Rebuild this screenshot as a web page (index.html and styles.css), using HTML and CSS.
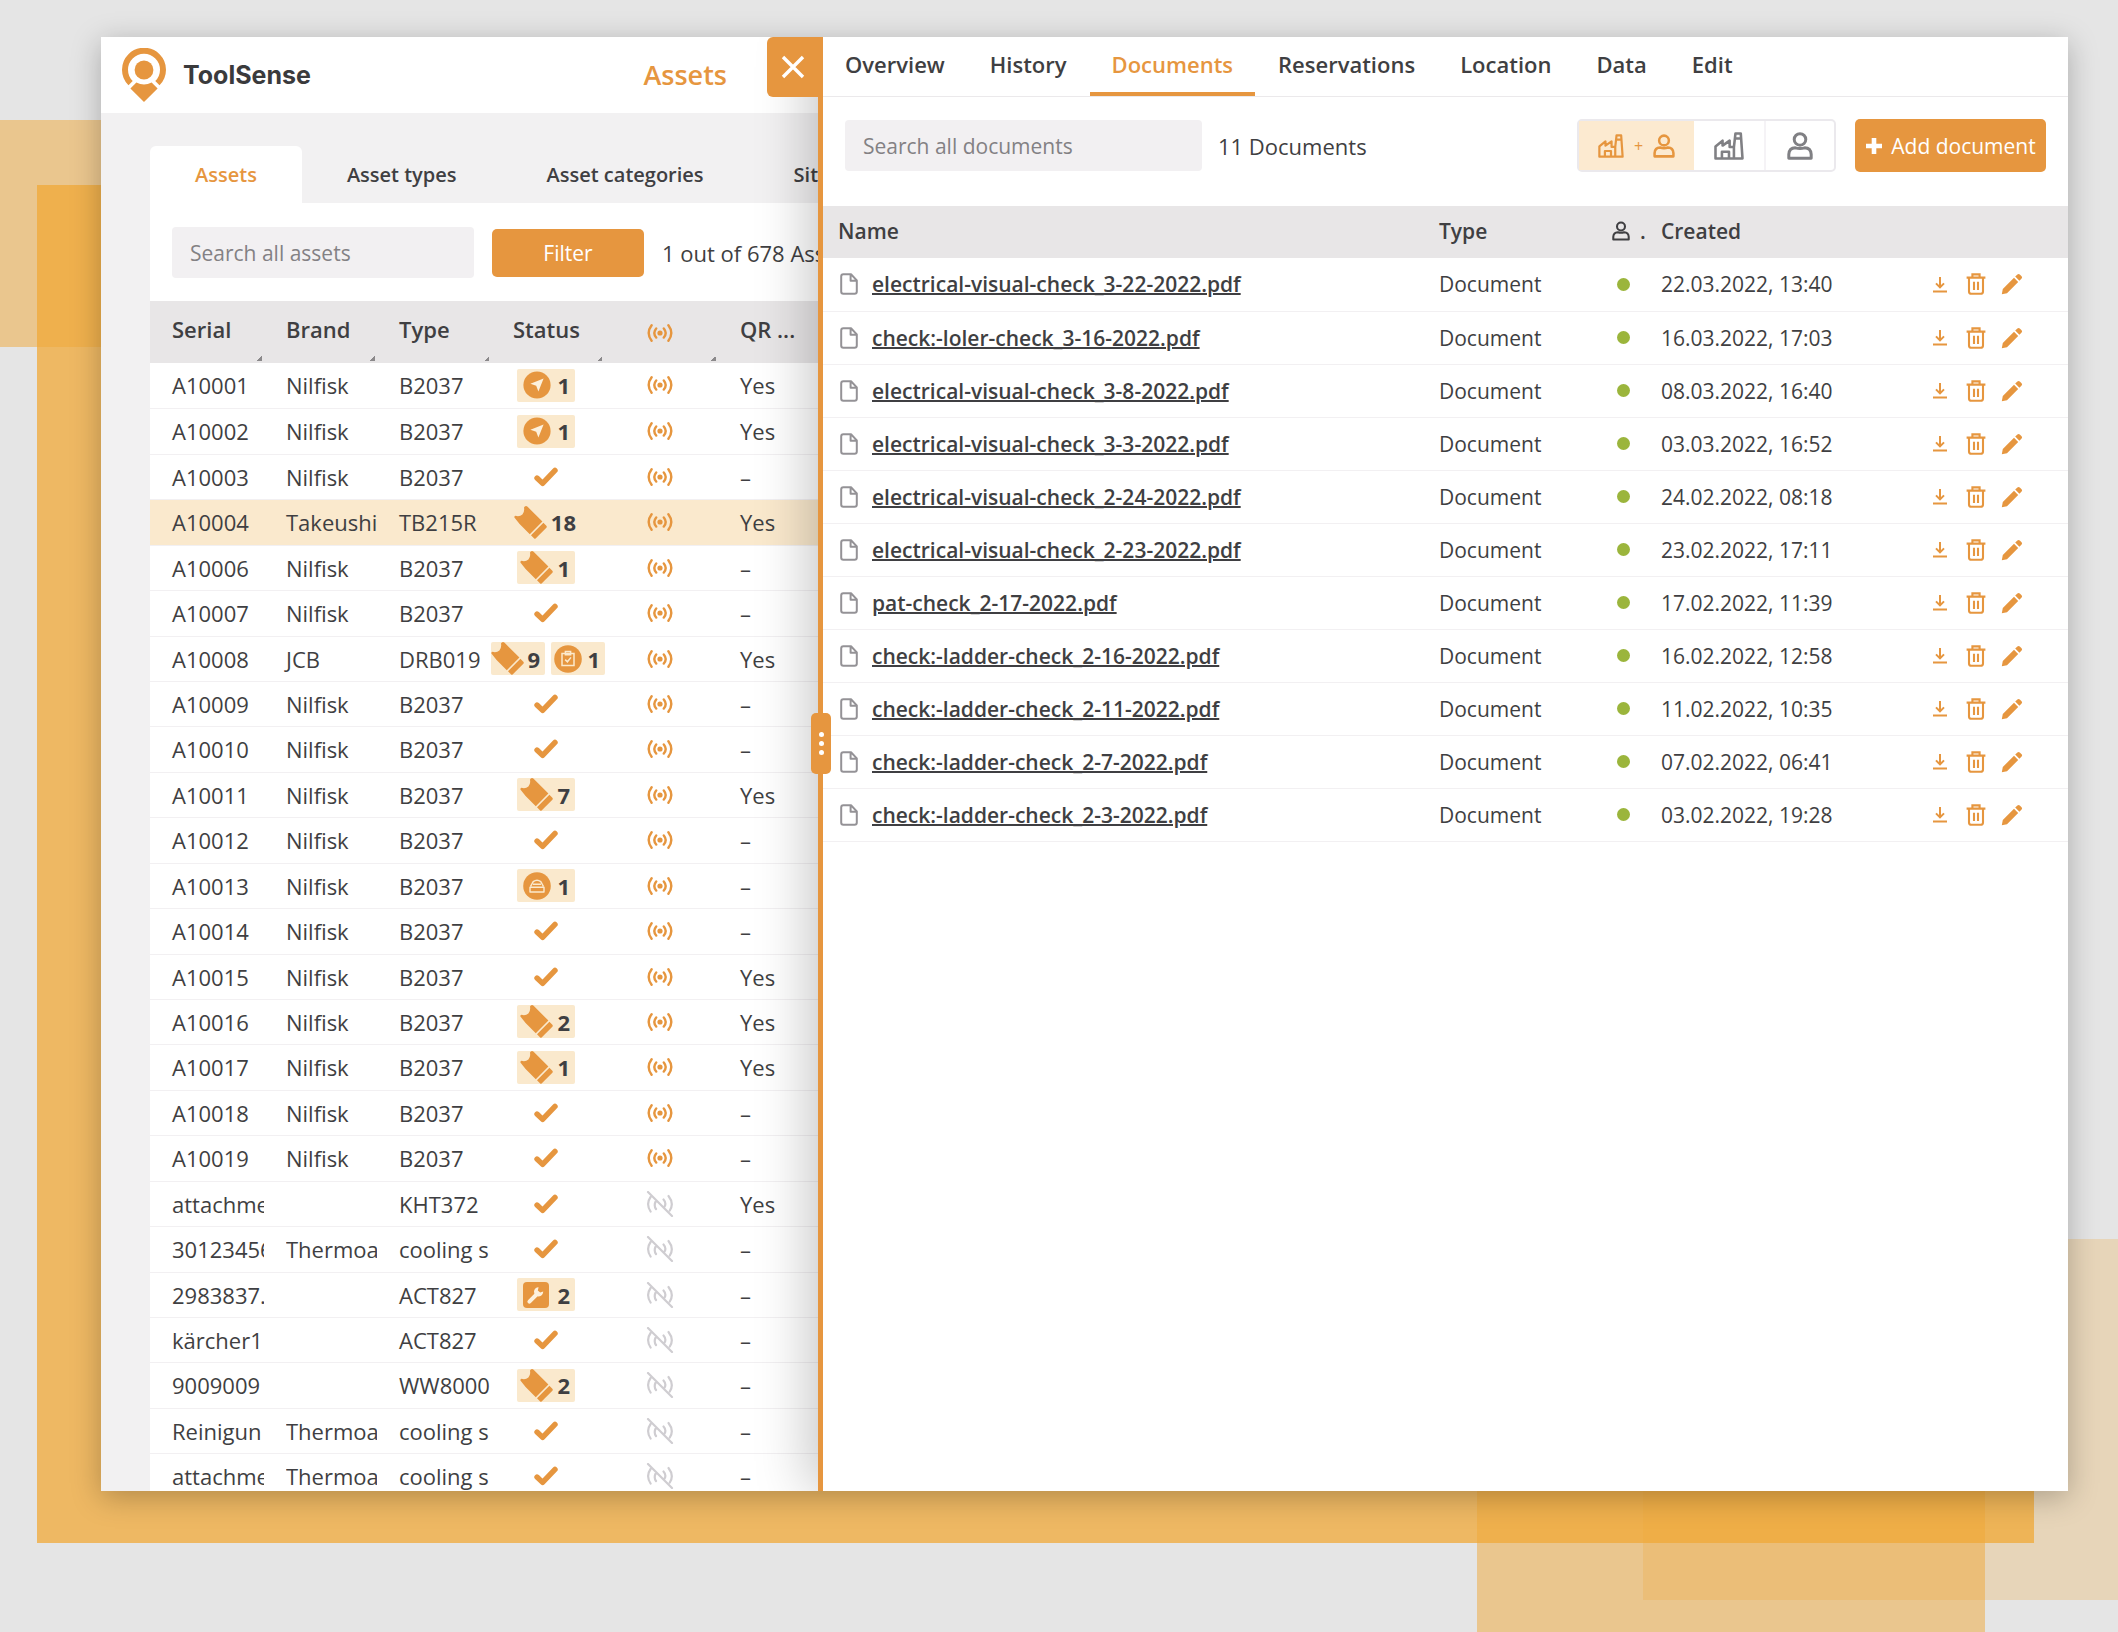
FILE: index.html
```html
<!DOCTYPE html>
<html lang="en">

<head>
  <meta charset="UTF-8">
  <meta name="viewport" content="width=device-width, initial-scale=1.0">
  <title>ToolSense - Assets</title>
  <link rel="stylesheet" href="styles.css">
</head>

<body>
  <!-- Icon set -->
  <svg class="icon-set" aria-hidden="true">
    <symbol id="signal" viewBox="0 0 26 20">
      <circle cx="13" cy="10" r="2.6" fill="currentColor" />
      <path d="M4.6 2.2Q-1.2 10 4.6 17.8M9.2 5.4Q5.4 10 9.2 14.6M16.8 5.4Q20.6 10 16.8 14.6M21.4 2.2Q27.2 10 21.4 17.8" fill="none" stroke="currentColor" stroke-width="2.4" stroke-linecap="round" />
    </symbol>
    <symbol id="signal-off" viewBox="0 0 28 26">
      <path d="M2 1L26 25M4.6 6Q-.4 13 4.6 20.5M9.4 11Q7.8 15 10 18M17.5 8.5Q20.6 12 18.6 15.5M22.5 5Q28.4 12.5 23.8 19.5" fill="none" stroke="currentColor" stroke-width="2.2" stroke-linecap="round" />
    </symbol>
    <symbol id="check" viewBox="0 0 24 20">
      <path d="M3 11L8.6 16.4L21 3.4" fill="none" stroke="currentColor" stroke-width="5.4" stroke-linecap="round" stroke-linejoin="round" />
    </symbol>
    <symbol id="ticket" viewBox="0 0 33 33">
      <path d="M12 0Q12.8 0 13.6 .8L28.4 15.6L15.8 28.2L5.6 18L.4 11.4Q0 10.4 1.4 9.8Q5.6 11 8.4 8.4Q10.8 5.6 10 1.6Q10.6 0 12 0ZM29.4 16.8L32.6 20Q33 20.8 32.6 21.4L21.6 32.4Q20.8 33 20.2 32.4L17 29.2Z" fill="currentColor" />
    </symbol>
    <symbol id="navigate" viewBox="0 0 28 28">
      <circle cx="14" cy="14" r="13.6" fill="currentColor" />
      <path d="M20.6 7.4L15.4 20.4L13.2 14.8L7.4 12.8Z" fill="#fdf1dc" />
    </symbol>
    <symbol id="clipboard" viewBox="0 0 28 28">
      <circle cx="14" cy="14" r="13.8" fill="currentColor" />
      <path d="M8 8.4H20V20.6H8ZM11.4 8.4V6.6H16.6V9.8H11.4ZM11.2 14.6L13.4 16.8L17 12.4" fill="none" stroke="#fbe9cc" stroke-width="1.5" />
    </symbol>
    <symbol id="helmet" viewBox="0 0 28 28">
      <circle cx="14" cy="14" r="13.8" fill="currentColor" />
      <path d="M7.6 14.4L10.2 9.6Q14 6.8 17.8 9.6L20.4 14.4M7 15.2H21V20H7ZM10 12.2H18" fill="none" stroke="#fbe9cc" stroke-width="1.4" stroke-linejoin="round" />
    </symbol>
    <symbol id="wrench" viewBox="0 0 26 26">
      <rect width="26" height="26" rx="4" fill="currentColor" />
      <path d="M6.4 19.6L14 12" stroke="#fdf1dc" stroke-width="4" stroke-linecap="round" />
      <path d="M20.2 9.6A4.6 4.6 0 1 1 15.6 5.2L14.8 8.4L17.2 10.4Z" fill="#fdf1dc" />
    </symbol>
    <symbol id="factory" viewBox="0 0 28 26">
      <path d="M1.4 24.6V13.4L8 8V12.6L14.6 8V14H18.6L20 1.4H25L26.6 24.6ZM18.6 14V24M20 6H25.4M7.4 24.4V18.4H14V24.4" fill="none" stroke="currentColor" stroke-width="2.4" stroke-linejoin="round" />
    </symbol>
    <symbol id="person" viewBox="0 0 28 30">
      <circle cx="14" cy="8" r="6.2" fill="none" stroke="currentColor" stroke-width="3.2" />
      <path d="M2 28.2V24Q2.4 17.2 9 17Q14 18.6 19 17Q25.6 17.2 26 24V28.2Z" fill="none" stroke="currentColor" stroke-width="3.2" stroke-linejoin="round" />
    </symbol>
    <symbol id="file" viewBox="0 0 18 22">
      <path d="M1.2 3.4Q1.2 1.2 3.4 1.2H11L16.8 7.4V18.6Q16.8 20.8 14.6 20.8H3.4Q1.2 20.8 1.2 18.6ZM10.6 1.2V7.8H16.8" fill="none" stroke="currentColor" stroke-width="2" stroke-linejoin="round" />
    </symbol>
    <symbol id="download" viewBox="0 0 16 17">
      <path d="M8 1V11M4 7.4L8 11.4L12 7.4M1 15.6H15" fill="none" stroke="currentColor" stroke-width="2" />
    </symbol>
    <symbol id="trash" viewBox="0 0 20 22">
      <path d="M.6 4.6H19.4M6.4 4.4V1.4H13.6V4.4M3 5V18.4Q3 20.8 5.4 20.8H14.6Q17 20.8 17 18.4V5M8 8.8V17M12 8.8V17" fill="none" stroke="currentColor" stroke-width="2.1" />
    </symbol>
    <symbol id="pencil" viewBox="0 0 22 22">
      <path d="M.8 21.2L1.8 16L13 4.8L17.2 9L6 20.2ZM14.2 3.6L16.4 1.4Q17.6 .4 18.8 1.4L20.6 3.2Q21.6 4.4 20.6 5.6L18.4 7.8Z" fill="currentColor" />
    </symbol>
  </svg>

  <div class="backdrop">
    <div class="block block-left"></div>
    <div class="block block-right"></div>
    <div class="block block-bottom"></div>
    <div class="block block-main"></div>
  </div>

  <div class="window">
    <main class="assets">
      <header class="header">
        <a class="logo" href="#">
          <svg viewBox="0 0 44 54" aria-hidden="true">
            <path d="M8.6 35.2A19 19 0 1 1 35.4 35.2" fill="none" stroke="currentColor" stroke-width="6" />
            <circle cx="22" cy="22" r="9.4" fill="currentColor" />
            <path d="M8.4 40.6L14.4 34.4Q22 38.6 29.6 34.4L35.6 40.6L22 54Z" fill="currentColor" />
          </svg>
          ToolSense
        </a>
        <h1>Assets</h1>
      </header>
      <div class="assets-body">
        <nav class="tabs">
          <a class="active" href="#">Assets</a>
          <a href="#">Asset types</a>
          <a href="#">Asset categories</a>
          <a href="#">Sites</a>
        </nav>
        <div class="card">
          <div class="toolbar">
            <input class="search" type="search" placeholder="Search all assets" aria-label="Search all assets">
            <button class="button filter" type="button">Filter</button>
            <span>1 out of 678 Assets</span>
          </div>
          <table class="asset-table">
            <colgroup>
              <col class="col-wide">
              <col class="col">
              <col class="col-wide">
              <col class="col">
              <col class="col-wide">
              <col>
            </colgroup>
            <thead>
              <tr>
                <th>Serial</th>
                <th>Brand</th>
                <th>Type</th>
                <th>Status</th>
                <th class="center"><svg class="signal" role="img" aria-label="Signal"><use href="#signal" /></svg></th>
                <th>QR ...</th>
              </tr>
            </thead>
            <tbody>
              <tr>
                <td>A10001</td><td>Nilfisk</td><td>B2037</td>
                <td class="center"><span class="badge"><svg class="round"><use href="#navigate" /></svg>1</span></td>
                <td class="center"><svg class="signal"><use href="#signal" /></svg></td>
                <td>Yes</td>
              </tr>
              <tr>
                <td>A10002</td><td>Nilfisk</td><td>B2037</td>
                <td class="center"><span class="badge"><svg class="round"><use href="#navigate" /></svg>1</span></td>
                <td class="center"><svg class="signal"><use href="#signal" /></svg></td>
                <td>Yes</td>
              </tr>
              <tr>
                <td>A10003</td><td>Nilfisk</td><td>B2037</td>
                <td class="center"><svg class="check"><use href="#check" /></svg></td>
                <td class="center"><svg class="signal"><use href="#signal" /></svg></td>
                <td>–</td>
              </tr>
              <tr class="selected">
                <td>A10004</td><td>Takeushi</td><td>TB215R</td>
                <td class="center"><span class="badge"><svg class="ticket"><use href="#ticket" /></svg>18</span></td>
                <td class="center"><svg class="signal"><use href="#signal" /></svg></td>
                <td>Yes</td>
              </tr>
              <tr>
                <td>A10006</td><td>Nilfisk</td><td>B2037</td>
                <td class="center"><span class="badge"><svg class="ticket"><use href="#ticket" /></svg>1</span></td>
                <td class="center"><svg class="signal"><use href="#signal" /></svg></td>
                <td>–</td>
              </tr>
              <tr>
                <td>A10007</td><td>Nilfisk</td><td>B2037</td>
                <td class="center"><svg class="check"><use href="#check" /></svg></td>
                <td class="center"><svg class="signal"><use href="#signal" /></svg></td>
                <td>–</td>
              </tr>
              <tr>
                <td>A10008</td><td>JCB</td><td>DRB019</td>
                <td class="double">
                  <div>
                    <span class="badge"><svg class="ticket"><use href="#ticket" /></svg>9</span>
                    <span class="badge"><svg class="round"><use href="#clipboard" /></svg>1</span>
                  </div>
                </td>
                <td class="center"><svg class="signal"><use href="#signal" /></svg></td>
                <td>Yes</td>
              </tr>
              <tr>
                <td>A10009</td><td>Nilfisk</td><td>B2037</td>
                <td class="center"><svg class="check"><use href="#check" /></svg></td>
                <td class="center"><svg class="signal"><use href="#signal" /></svg></td>
                <td>–</td>
              </tr>
              <tr>
                <td>A10010</td><td>Nilfisk</td><td>B2037</td>
                <td class="center"><svg class="check"><use href="#check" /></svg></td>
                <td class="center"><svg class="signal"><use href="#signal" /></svg></td>
                <td>–</td>
              </tr>
              <tr>
                <td>A10011</td><td>Nilfisk</td><td>B2037</td>
                <td class="center"><span class="badge"><svg class="ticket"><use href="#ticket" /></svg>7</span></td>
                <td class="center"><svg class="signal"><use href="#signal" /></svg></td>
                <td>Yes</td>
              </tr>
              <tr>
                <td>A10012</td><td>Nilfisk</td><td>B2037</td>
                <td class="center"><svg class="check"><use href="#check" /></svg></td>
                <td class="center"><svg class="signal"><use href="#signal" /></svg></td>
                <td>–</td>
              </tr>
              <tr>
                <td>A10013</td><td>Nilfisk</td><td>B2037</td>
                <td class="center"><span class="badge"><svg class="round"><use href="#helmet" /></svg>1</span></td>
                <td class="center"><svg class="signal"><use href="#signal" /></svg></td>
                <td>–</td>
              </tr>
              <tr>
                <td>A10014</td><td>Nilfisk</td><td>B2037</td>
                <td class="center"><svg class="check"><use href="#check" /></svg></td>
                <td class="center"><svg class="signal"><use href="#signal" /></svg></td>
                <td>–</td>
              </tr>
              <tr>
                <td>A10015</td><td>Nilfisk</td><td>B2037</td>
                <td class="center"><svg class="check"><use href="#check" /></svg></td>
                <td class="center"><svg class="signal"><use href="#signal" /></svg></td>
                <td>Yes</td>
              </tr>
              <tr>
                <td>A10016</td><td>Nilfisk</td><td>B2037</td>
                <td class="center"><span class="badge"><svg class="ticket"><use href="#ticket" /></svg>2</span></td>
                <td class="center"><svg class="signal"><use href="#signal" /></svg></td>
                <td>Yes</td>
              </tr>
              <tr>
                <td>A10017</td><td>Nilfisk</td><td>B2037</td>
                <td class="center"><span class="badge"><svg class="ticket"><use href="#ticket" /></svg>1</span></td>
                <td class="center"><svg class="signal"><use href="#signal" /></svg></td>
                <td>Yes</td>
              </tr>
              <tr>
                <td>A10018</td><td>Nilfisk</td><td>B2037</td>
                <td class="center"><svg class="check"><use href="#check" /></svg></td>
                <td class="center"><svg class="signal"><use href="#signal" /></svg></td>
                <td>–</td>
              </tr>
              <tr>
                <td>A10019</td><td>Nilfisk</td><td>B2037</td>
                <td class="center"><svg class="check"><use href="#check" /></svg></td>
                <td class="center"><svg class="signal"><use href="#signal" /></svg></td>
                <td>–</td>
              </tr>
              <tr>
                <td><div class="clip">attachme</div></td><td></td><td>KHT372</td>
                <td class="center"><svg class="check"><use href="#check" /></svg></td>
                <td class="center"><svg class="signal-off"><use href="#signal-off" /></svg></td>
                <td>Yes</td>
              </tr>
              <tr>
                <td><div class="clip">30123456</div></td><td><div class="clip">Thermoa</div></td><td>cooling s</td>
                <td class="center"><svg class="check"><use href="#check" /></svg></td>
                <td class="center"><svg class="signal-off"><use href="#signal-off" /></svg></td>
                <td>–</td>
              </tr>
              <tr>
                <td><div class="clip">2983837.</div></td><td></td><td>ACT827</td>
                <td class="center"><span class="badge"><svg class="square"><use href="#wrench" /></svg>2</span></td>
                <td class="center"><svg class="signal-off"><use href="#signal-off" /></svg></td>
                <td>–</td>
              </tr>
              <tr>
                <td>kärcher1</td><td></td><td>ACT827</td>
                <td class="center"><svg class="check"><use href="#check" /></svg></td>
                <td class="center"><svg class="signal-off"><use href="#signal-off" /></svg></td>
                <td>–</td>
              </tr>
              <tr>
                <td>9009009</td><td></td><td>WW8000</td>
                <td class="center"><span class="badge"><svg class="ticket"><use href="#ticket" /></svg>2</span></td>
                <td class="center"><svg class="signal-off"><use href="#signal-off" /></svg></td>
                <td>–</td>
              </tr>
              <tr>
                <td>Reinigun</td><td><div class="clip">Thermoa</div></td><td>cooling s</td>
                <td class="center"><svg class="check"><use href="#check" /></svg></td>
                <td class="center"><svg class="signal-off"><use href="#signal-off" /></svg></td>
                <td>–</td>
              </tr>
              <tr>
                <td><div class="clip">attachme</div></td><td><div class="clip">Thermoa</div></td><td>cooling s</td>
                <td class="center"><svg class="check"><use href="#check" /></svg></td>
                <td class="center"><svg class="signal-off"><use href="#signal-off" /></svg></td>
                <td>–</td>
              </tr>
            </tbody>
          </table>
        </div>
      </div>
    </main>

    <aside class="detail">
      <button class="close" type="button" aria-label="Close">
        <svg viewBox="0 0 24 24"><path d="M2 2L22 22M22 2L2 22" stroke="currentColor" stroke-width="3.4" /></svg>
      </button>
      <button class="handle" type="button" aria-label="Resize panel"><i></i><i></i><i></i></button>

      <nav class="detail-tabs">
        <a href="#">Overview</a>
        <a href="#">History</a>
        <a class="active" href="#">Documents</a>
        <a href="#">Reservations</a>
        <a href="#">Location</a>
        <a href="#">Data</a>
        <a href="#">Edit</a>
      </nav>

      <div class="detail-toolbar">
        <input class="search" type="search" placeholder="Search all documents" aria-label="Search all documents">
        <span>11 Documents</span>
        <div class="toggle">
          <button class="on" type="button" aria-label="Company and customer">
            <svg class="factory-small"><use href="#factory" /></svg><b>+</b><svg class="person-small"><use href="#person" /></svg>
          </button>
          <button type="button" aria-label="Company"><svg><use href="#factory" /></svg></button>
          <button type="button" aria-label="Customer"><svg><use href="#person" /></svg></button>
        </div>
        <button class="button add" type="button">
          <svg viewBox="0 0 18 18"><path d="M9 1V17M1 9H17" stroke="currentColor" stroke-width="4.6" /></svg>
          Add document
        </button>
      </div>

      <table class="doc-table">
        <colgroup>
          <col>
          <col class="col-type">
          <col class="col-person">
          <col class="col-created">
          <col class="col-actions">
        </colgroup>
        <thead>
          <tr>
            <th>Name</th>
            <th>Type</th>
            <th class="person"><div><svg role="img" aria-label="Visible to customer"><use href="#person" /></svg>.</div></th>
            <th>Created</th>
            <th></th>
          </tr>
        </thead>
        <tbody>
          <tr>
            <td><div class="name"><svg><use href="#file" /></svg><a href="#">electrical-visual-check_3-22-2022.pdf</a></div></td>
            <td>Document</td><td class="state"><span></span></td><td>22.03.2022, 13:40</td>
            <td><div class="actions"><button type="button" aria-label="Download"><svg class="download"><use href="#download" /></svg></button><button type="button" aria-label="Delete"><svg class="trash"><use href="#trash" /></svg></button><button type="button" aria-label="Edit"><svg class="pencil"><use href="#pencil" /></svg></button></div></td>
          </tr>
          <tr>
            <td><div class="name"><svg><use href="#file" /></svg><a href="#">check:-loler-check_3-16-2022.pdf</a></div></td>
            <td>Document</td><td class="state"><span></span></td><td>16.03.2022, 17:03</td>
            <td><div class="actions"><button type="button" aria-label="Download"><svg class="download"><use href="#download" /></svg></button><button type="button" aria-label="Delete"><svg class="trash"><use href="#trash" /></svg></button><button type="button" aria-label="Edit"><svg class="pencil"><use href="#pencil" /></svg></button></div></td>
          </tr>
          <tr>
            <td><div class="name"><svg><use href="#file" /></svg><a href="#">electrical-visual-check_3-8-2022.pdf</a></div></td>
            <td>Document</td><td class="state"><span></span></td><td>08.03.2022, 16:40</td>
            <td><div class="actions"><button type="button" aria-label="Download"><svg class="download"><use href="#download" /></svg></button><button type="button" aria-label="Delete"><svg class="trash"><use href="#trash" /></svg></button><button type="button" aria-label="Edit"><svg class="pencil"><use href="#pencil" /></svg></button></div></td>
          </tr>
          <tr>
            <td><div class="name"><svg><use href="#file" /></svg><a href="#">electrical-visual-check_3-3-2022.pdf</a></div></td>
            <td>Document</td><td class="state"><span></span></td><td>03.03.2022, 16:52</td>
            <td><div class="actions"><button type="button" aria-label="Download"><svg class="download"><use href="#download" /></svg></button><button type="button" aria-label="Delete"><svg class="trash"><use href="#trash" /></svg></button><button type="button" aria-label="Edit"><svg class="pencil"><use href="#pencil" /></svg></button></div></td>
          </tr>
          <tr>
            <td><div class="name"><svg><use href="#file" /></svg><a href="#">electrical-visual-check_2-24-2022.pdf</a></div></td>
            <td>Document</td><td class="state"><span></span></td><td>24.02.2022, 08:18</td>
            <td><div class="actions"><button type="button" aria-label="Download"><svg class="download"><use href="#download" /></svg></button><button type="button" aria-label="Delete"><svg class="trash"><use href="#trash" /></svg></button><button type="button" aria-label="Edit"><svg class="pencil"><use href="#pencil" /></svg></button></div></td>
          </tr>
          <tr>
            <td><div class="name"><svg><use href="#file" /></svg><a href="#">electrical-visual-check_2-23-2022.pdf</a></div></td>
            <td>Document</td><td class="state"><span></span></td><td>23.02.2022, 17:11</td>
            <td><div class="actions"><button type="button" aria-label="Download"><svg class="download"><use href="#download" /></svg></button><button type="button" aria-label="Delete"><svg class="trash"><use href="#trash" /></svg></button><button type="button" aria-label="Edit"><svg class="pencil"><use href="#pencil" /></svg></button></div></td>
          </tr>
          <tr>
            <td><div class="name"><svg><use href="#file" /></svg><a href="#">pat-check_2-17-2022.pdf</a></div></td>
            <td>Document</td><td class="state"><span></span></td><td>17.02.2022, 11:39</td>
            <td><div class="actions"><button type="button" aria-label="Download"><svg class="download"><use href="#download" /></svg></button><button type="button" aria-label="Delete"><svg class="trash"><use href="#trash" /></svg></button><button type="button" aria-label="Edit"><svg class="pencil"><use href="#pencil" /></svg></button></div></td>
          </tr>
          <tr>
            <td><div class="name"><svg><use href="#file" /></svg><a href="#">check:-ladder-check_2-16-2022.pdf</a></div></td>
            <td>Document</td><td class="state"><span></span></td><td>16.02.2022, 12:58</td>
            <td><div class="actions"><button type="button" aria-label="Download"><svg class="download"><use href="#download" /></svg></button><button type="button" aria-label="Delete"><svg class="trash"><use href="#trash" /></svg></button><button type="button" aria-label="Edit"><svg class="pencil"><use href="#pencil" /></svg></button></div></td>
          </tr>
          <tr>
            <td><div class="name"><svg><use href="#file" /></svg><a href="#">check:-ladder-check_2-11-2022.pdf</a></div></td>
            <td>Document</td><td class="state"><span></span></td><td>11.02.2022, 10:35</td>
            <td><div class="actions"><button type="button" aria-label="Download"><svg class="download"><use href="#download" /></svg></button><button type="button" aria-label="Delete"><svg class="trash"><use href="#trash" /></svg></button><button type="button" aria-label="Edit"><svg class="pencil"><use href="#pencil" /></svg></button></div></td>
          </tr>
          <tr>
            <td><div class="name"><svg><use href="#file" /></svg><a href="#">check:-ladder-check_2-7-2022.pdf</a></div></td>
            <td>Document</td><td class="state"><span></span></td><td>07.02.2022, 06:41</td>
            <td><div class="actions"><button type="button" aria-label="Download"><svg class="download"><use href="#download" /></svg></button><button type="button" aria-label="Delete"><svg class="trash"><use href="#trash" /></svg></button><button type="button" aria-label="Edit"><svg class="pencil"><use href="#pencil" /></svg></button></div></td>
          </tr>
          <tr>
            <td><div class="name"><svg><use href="#file" /></svg><a href="#">check:-ladder-check_2-3-2022.pdf</a></div></td>
            <td>Document</td><td class="state"><span></span></td><td>03.02.2022, 19:28</td>
            <td><div class="actions"><button type="button" aria-label="Download"><svg class="download"><use href="#download" /></svg></button><button type="button" aria-label="Delete"><svg class="trash"><use href="#trash" /></svg></button><button type="button" aria-label="Edit"><svg class="pencil"><use href="#pencil" /></svg></button></div></td>
          </tr>
        </tbody>
      </table>
    </aside>
  </div>
</body>

</html>
```
FILE: styles.css
```css
* {
  box-sizing: border-box;
}

body {
  margin: 0;
  height: 100vh;
  padding: 37px 50px 141px 101px;
  overflow: hidden;
  background: #e5e5e5;
  color: #3f3f42;
  font-family: "Open Sans", "Noto Sans", sans-serif;
  font-size: 22px;
  line-height: 30px;
}

a {
  color: inherit;
  text-decoration: none;
}

button,
input {
  font: inherit;
  border: 0;
}

button {
  padding: 0;
  background: none;
  color: inherit;
  cursor: pointer;
}

svg {
  display: block;
  flex: none;
}

.icon-set {
  position: absolute;
  width: 0;
  height: 0;
}

/* Transparent blocks behind the window */
.backdrop {
  position: absolute;
  inset: 0;
  overflow: hidden;
}

.block {
  position: absolute;
}

.block-left {
  left: 0;
  top: 120px;
  width: 300px;
  height: 227px;
  background: rgba(240, 168, 55, 0.5);
}

.block-right {
  left: 1643px;
  right: 0;
  top: 1239px;
  bottom: 32px;
  background: rgba(240, 168, 55, 0.25);
}

.block-bottom {
  left: 1477px;
  width: 508px;
  top: 1300px;
  bottom: 0;
  background: rgba(240, 168, 55, 0.5);
}

.block-main {
  left: 37px;
  right: 84px;
  top: 185px;
  bottom: 89px;
  background: rgba(240, 168, 55, 0.75);
}

.window {
  position: relative;
  display: grid;
  grid-template-columns: 717px 1fr;
  height: 100%;
  background: #fff;
  box-shadow: 0 6px 28px rgba(0, 0, 0, 0.26);
}

/* Assets list */
.assets {
  display: flex;
  flex-direction: column;
  overflow: hidden;
  white-space: nowrap;
}

.header {
  display: flex;
  align-items: center;
  justify-content: space-between;
  flex: none;
  height: 76px;
  padding: 0 91px 0 21px;
}

.logo {
  display: flex;
  align-items: center;
  gap: 17px;
  color: #3a3a3c;
  font-family: Inter, sans-serif;
  font-size: 25px;
  font-weight: 700;
}

.logo svg {
  width: 44px;
  height: 54px;
  color: #e6963f;
}

.header h1 {
  margin: 0;
  color: #e6963f;
  font-size: 27px;
  font-weight: 600;
}

.assets-body {
  flex: 1;
  padding: 33px 0 0 49px;
  background: #f2f1f2;
}

.tabs {
  display: flex;
  font-size: 20px;
  font-weight: 600;
}

.tabs a {
  padding: 14px 45px 13px;
}

.tabs .active {
  background: #fff;
  border-radius: 6px 6px 0 0;
  color: #e6963f;
}

.card {
  height: 100%;
  background: #fff;
}

.toolbar {
  display: flex;
  align-items: center;
  gap: 18px;
  padding: 24px 0 23px 22px;
}

.search {
  flex: none;
  height: 51px;
  padding: 0 18px;
  border-radius: 4px;
  background: #f2f0f2;
  color: #3f3f42;
  font-size: 21px;
}

.search::placeholder {
  color: #838184;
  opacity: 1;
}

.toolbar .search {
  width: 302px;
}

.button {
  flex: none;
  height: 48px;
  border-radius: 5px;
  background: #e6963f;
  color: #fff;
  font-size: 21px;
}

.filter {
  width: 152px;
}

table {
  width: 100%;
  border-collapse: collapse;
  table-layout: fixed;
}

th,
td {
  padding: 0;
  text-align: left;
}

th {
  background: #e8e6e7;
  font-weight: 600;
}

tbody tr {
  border-bottom: 1px solid #f2f0f2;
}

.col {
  width: 113px;
}

.col-wide {
  width: 114px;
}

.asset-table th,
.asset-table td {
  padding-left: 22px;
}

.asset-table th {
  height: 62px;
  padding-bottom: 7px;
}

/* Resize grips between the header cells */
.asset-table th:not(:last-child) {
  background: linear-gradient(135deg, transparent 50%, #8b898b 50%) calc(100% - 2px) calc(100% - 2px) / 5px 5px no-repeat #e8e6e7;
}

.asset-table tbody tr {
  height: 45px;
}

.asset-table tbody tr:nth-child(7n + 2),
.asset-table tbody tr:nth-child(7n + 4),
.asset-table tbody tr:nth-child(7n + 6) {
  height: 46px;
}

.asset-table .selected {
  background: #fae9cd;
}

.asset-table .center {
  padding: 0 3px 0 0;
}

.asset-table th.center {
  padding-top: 2px;
}

.center > * {
  margin: 0 auto;
}

.clip {
  overflow: hidden;
}

.signal {
  width: 26px;
  height: 20px;
  color: #e6963f;
}

.signal-off {
  width: 28px;
  height: 26px;
  color: #cfcdd1;
}

.check {
  width: 24px;
  height: 20px;
  color: #e6963f;
}

.badge {
  display: flex;
  align-items: center;
  justify-content: space-between;
  width: 58px;
  height: 33px;
  padding: 0 5px 0 6px;
  border-radius: 2px;
  background: #fae9cd;
  font-weight: 700;
}

.badge svg {
  color: #e6963f;
}

.badge .ticket {
  width: 33px;
  height: 33px;
  margin-left: -3px;
}

.badge .round {
  width: 28px;
  height: 28px;
}

.badge .square {
  width: 26px;
  height: 26px;
}

.selected .badge {
  width: 64px;
  padding: 0 2px 0 3px;
}

.asset-table .double {
  padding: 0;
}

.double div {
  display: flex;
  gap: 6px;
}

.double .badge {
  flex: none;
  width: 54px;
  padding: 0 5px 0 3px;
}

/* Detail panel */
.detail {
  position: relative;
  border-left: 5px solid #e6963f;
  background: #fff;
  box-shadow: -10px 0 50px rgba(0, 0, 0, 0.22);
  clip-path: inset(0 0 0 -90px);
  white-space: nowrap;
}

.close {
  position: absolute;
  top: 0;
  left: -56px;
  display: flex;
  align-items: center;
  width: 56px;
  height: 60px;
  padding-left: 14px;
  border-radius: 6px 0 0 6px;
  background: #e6963f;
  color: #fff;
}

.close svg {
  width: 24px;
  height: 24px;
}

.handle {
  position: absolute;
  top: 676px;
  left: -12px;
  display: flex;
  flex-direction: column;
  align-items: center;
  justify-content: center;
  gap: 4px;
  width: 20px;
  height: 61px;
  border-radius: 5px;
  background: #e6963f;
}

.handle i {
  width: 5px;
  height: 5px;
  border-radius: 50%;
  background: #fff;
}

.detail-tabs {
  display: flex;
  gap: 1px;
  height: 60px;
  border-bottom: 1px solid #ebe9eb;
  font-weight: 600;
}

.detail-tabs a {
  height: 59px;
  padding: 12px 22px;
}

.detail-tabs .active {
  border-bottom: 4px solid #e6963f;
  color: #e6963f;
}

.detail-toolbar {
  display: flex;
  align-items: center;
  gap: 16px;
  padding: 22px 22px 34px;
}

.detail-toolbar .search {
  width: 357px;
}

.toggle {
  display: flex;
  height: 53px;
  margin: 0 3px 0 auto;
  border: 2px solid #ebe9ed;
  border-radius: 5px;
  color: #808084;
}

.toggle button {
  display: flex;
  align-items: center;
  justify-content: center;
  width: 70px;
}

.toggle button:last-child {
  border-left: 2px solid #f5f3f6;
}

.toggle .on {
  gap: 10px;
  width: 115px;
  background: #fcead0;
  color: #e6963f;
}

.toggle b {
  font-size: 16px;
  font-weight: 400;
}

.toggle svg {
  width: 30px;
  height: 28px;
}

.toggle .factory-small {
  width: 26px;
  height: 24px;
}

.toggle .person-small {
  width: 22px;
  height: 24px;
}

.add {
  display: flex;
  align-items: center;
  justify-content: center;
  gap: 8px;
  width: 191px;
  height: 53px;
}

.add svg {
  width: 18px;
  height: 18px;
}

.doc-table {
  font-size: 21px;
}

.col-type {
  width: 174px;
}

.col-person {
  width: 48px;
}

.col-created {
  width: 240px;
}

.col-actions {
  width: 182px;
}

.doc-table th,
.doc-table td {
  height: 53px;
  padding-left: 15px;
}

.doc-table th {
  height: 52px;
  padding-bottom: 2px;
}

.doc-table th.person {
  padding-left: 14px;
}

.person div {
  display: flex;
  align-items: center;
  gap: 10px;
}

.person svg {
  width: 18px;
  height: 20px;
}

.state span {
  display: block;
  width: 13px;
  height: 13px;
  margin-left: 4px;
  border-radius: 50%;
  background: #9bb53c;
}

.name {
  display: flex;
  align-items: center;
  gap: 14px;
  padding-left: 2px;
}

.name svg {
  width: 18px;
  height: 22px;
  color: #949296;
}

.name a {
  font-weight: 600;
  text-decoration: underline;
  text-decoration-thickness: 2px;
}

.actions {
  display: flex;
  align-items: center;
  justify-content: flex-end;
  gap: 14px;
  padding-right: 45px;
  color: #e6963f;
}

.actions button {
  width: 22px;
}

.actions svg {
  margin: 0 auto;
}

.download {
  width: 16px;
  height: 17px;
}

.trash {
  width: 20px;
  height: 22px;
}

.pencil {
  width: 22px;
  height: 22px;
}
```
